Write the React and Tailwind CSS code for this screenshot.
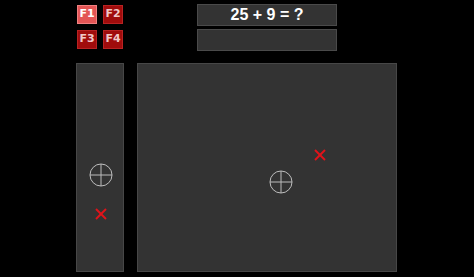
import React from 'react';

const Crosshair = ({ x, y }) => (
  <svg
    className="absolute"
    style={{ left: x - 12, top: y - 12 }}
    width="24"
    height="24"
    viewBox="0 0 24 24"
  >
    <circle cx="12" cy="12" r="11" fill="none" stroke="#bdbdbd" strokeWidth="1" />
    <line x1="12" y1="1" x2="12" y2="23" stroke="#bdbdbd" strokeWidth="1" />
    <line x1="1" y1="12" x2="23" y2="12" stroke="#bdbdbd" strokeWidth="1" />
  </svg>
);

const Cross = ({ x, y }) => (
  <svg
    className="absolute"
    style={{ left: x - 7, top: y - 7 }}
    width="14"
    height="14"
    viewBox="0 0 14 14"
  >
    <line x1="2" y1="2" x2="12" y2="12" stroke="#e0141a" strokeWidth="2" />
    <line x1="12" y1="2" x2="2" y2="12" stroke="#e0141a" strokeWidth="2" />
  </svg>
);

const FKey = ({ label, active }) => (
  <button
    className={`w-[20px] h-[19px] flex items-center justify-center text-[11px] font-bold border ${
      active
        ? 'bg-[#e35555] border-[#f08080] text-white'
        : 'bg-[#a00c0c] border-[#b82222] text-[#f0c8c8]'
    }`}
    style={{ fontFamily: '"DejaVu Sans", sans-serif' }}
  >
    {label}
  </button>
);

const App = () => {
  return (
    <div className="w-[474px] h-[277px] bg-black overflow-hidden" style={{ fontFamily: '"Liberation Sans", Arial, sans-serif' }}>
      {/* Top row */}
      <div className="flex pt-[5px] pl-[77px]">
        <div className="grid grid-cols-2 gap-x-[6px] gap-y-[6px] h-[44px]">
          <FKey label="F1" active />
          <FKey label="F2" />
          <FKey label="F3" />
          <FKey label="F4" />
        </div>
        <div className="ml-[74px] -mt-[1px] flex flex-col gap-[3px]">
          <div className="w-[140px] h-[22px] bg-[#333333] border border-[#4a4a4a] flex items-center justify-center text-white text-[16px] font-bold">
            25 + 9 = ?
          </div>
          <div className="w-[140px] h-[22px] bg-[#333333] border border-[#4a4a4a]" />
        </div>
      </div>

      {/* Panels */}
      <div className="flex mt-[12px] pl-[76px] gap-[13px]">
        <div className="relative w-[48px] h-[209px] bg-[#333333] border border-[#474747]">
          <Crosshair x={24} y={111} />
          <Cross x={24} y={150} />
        </div>
        <div className="relative w-[260px] h-[209px] bg-[#333333] border border-[#474747]">
          <Crosshair x={143} y={118} />
          <Cross x={182} y={91} />
        </div>
      </div>
    </div>
  );
};

export default App;
